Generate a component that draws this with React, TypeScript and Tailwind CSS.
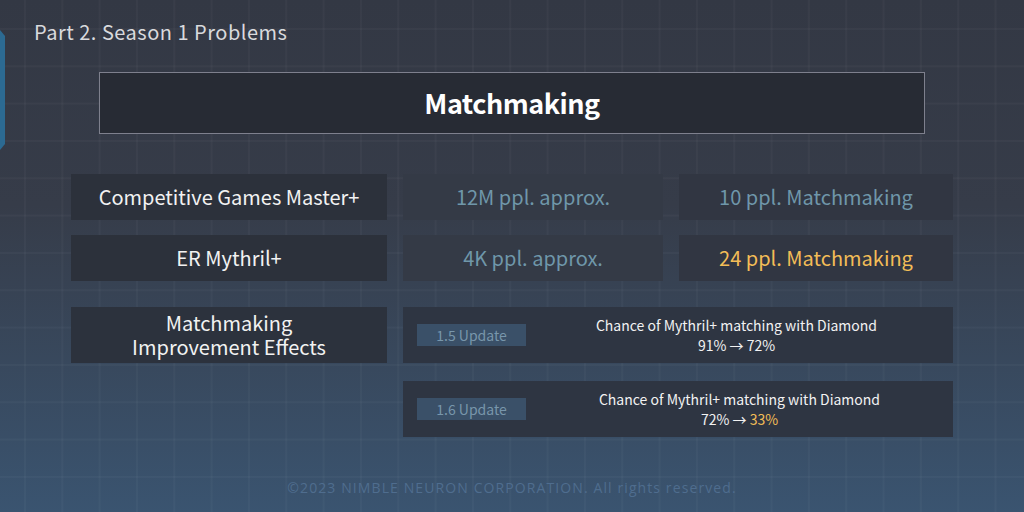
import React from "react";

const font = { fontFamily: '"Noto Sans CJK KR", "Noto Sans", sans-serif' };

export default function App() {
  return (
    <div
      className="relative w-[1024px] h-[512px] overflow-hidden bg-[linear-gradient(180deg,#333844_0%,#363c49_40%,#3a5470_100%)]"
      style={font}
    >
      {/* grid */}
      <div className="absolute inset-0 bg-[linear-gradient(to_right,rgba(255,255,255,0.028)_2px,transparent_2px),linear-gradient(to_bottom,rgba(255,255,255,0.028)_2px,transparent_2px)] bg-[length:37.33px_37.33px] bg-[position:24px_28px]" />
      {/* left accent */}
      <div className="absolute left-0 top-[30px] w-[5px] h-[120px] bg-[#2c6a92] [clip-path:polygon(0_0,100%_6px,100%_calc(100%-6px),0_100%)]" />

      <div className="relative flex flex-col h-full">
        <div className="pl-[34px] pt-[18px] text-[20px] leading-[28px] text-[#d9dadd] tracking-[0.5px]">
          Part 2. Season 1 Problems
        </div>

        <div className="mt-[26px] mx-[99px] h-[62px] border border-[#7e808d] bg-[#272b34] flex items-center justify-center">
          <span className="text-[27px] font-bold text-white tracking-[-0.5px]">Matchmaking</span>
        </div>

        <div className="mt-[40px] ml-[71px] grid grid-cols-[316px_260px_274px] gap-x-[16px] text-[20px]">
          <div className="h-[46px] bg-[#2c313b] flex items-center justify-center text-[#f2f2f2]">
            Competitive Games Master+
          </div>
          <div className="h-[46px] bg-[#343a46] flex items-center justify-center text-[#6f97aa]">
            12M ppl. approx.
          </div>
          <div className="h-[46px] bg-[#313642] flex items-center justify-center text-[#6f97aa]">
            10 ppl. Matchmaking
          </div>

          <div className="mt-[15px] h-[46px] bg-[#2c313b] flex items-center justify-center text-[#f2f2f2]">
            ER Mythril+
          </div>
          <div className="mt-[15px] h-[46px] bg-[#343a46] flex items-center justify-center text-[#6f97aa]">
            4K ppl. approx.
          </div>
          <div className="mt-[15px] h-[46px] bg-[#313642] flex items-center justify-center text-[#f3bd57]">
            24 ppl. Matchmaking
          </div>

          <div className="mt-[26px] h-[56px] bg-[#2c323d] flex flex-col items-center justify-center text-[#f2f2f2]">
            <div className="leading-[24px]">Matchmaking</div>
            <div className="leading-[24px]">Improvement Effects</div>
          </div>
          <div className="col-span-2 mt-[26px] h-[56px] bg-[#2e3542] flex items-center pl-[14px]">
            <div className="w-[109px] h-[22px] bg-[#3a5068] flex items-center justify-center text-[14px] text-[#7896ab]">
              1.5 Update
            </div>
            <div className="flex-1 flex flex-col items-center text-[14px] text-[#f2f2f2] pr-[6px]">
              <div className="leading-[20px]">Chance of Mythril+ matching with Diamond</div>
              <div className="leading-[20px]">91% → 72%</div>
            </div>
          </div>

          <div />
          <div className="col-span-2 mt-[18px] h-[56px] bg-[#2e3542] flex items-center pl-[14px]">
            <div className="w-[109px] h-[22px] bg-[#3a5068] flex items-center justify-center text-[14px] text-[#7896ab]">
              1.6 Update
            </div>
            <div className="flex-1 flex flex-col items-center text-[14px] text-[#f2f2f2]">
              <div className="leading-[20px]">Chance of Mythril+ matching with Diamond</div>
              <div className="leading-[20px]">
                72% → <span className="text-[#f3bd57]">33%</span>
              </div>
            </div>
          </div>
        </div>

        <div
          className="mt-auto mb-[14px] text-center text-[14px] tracking-[1.1px] text-[#4f6d8e]"
          style={{ fontFamily: '"Open Sans", "Noto Sans", sans-serif' }}
        >
          ©2023 NIMBLE NEURON CORPORATION. All rights reserved.
        </div>
      </div>
    </div>
  );
}
